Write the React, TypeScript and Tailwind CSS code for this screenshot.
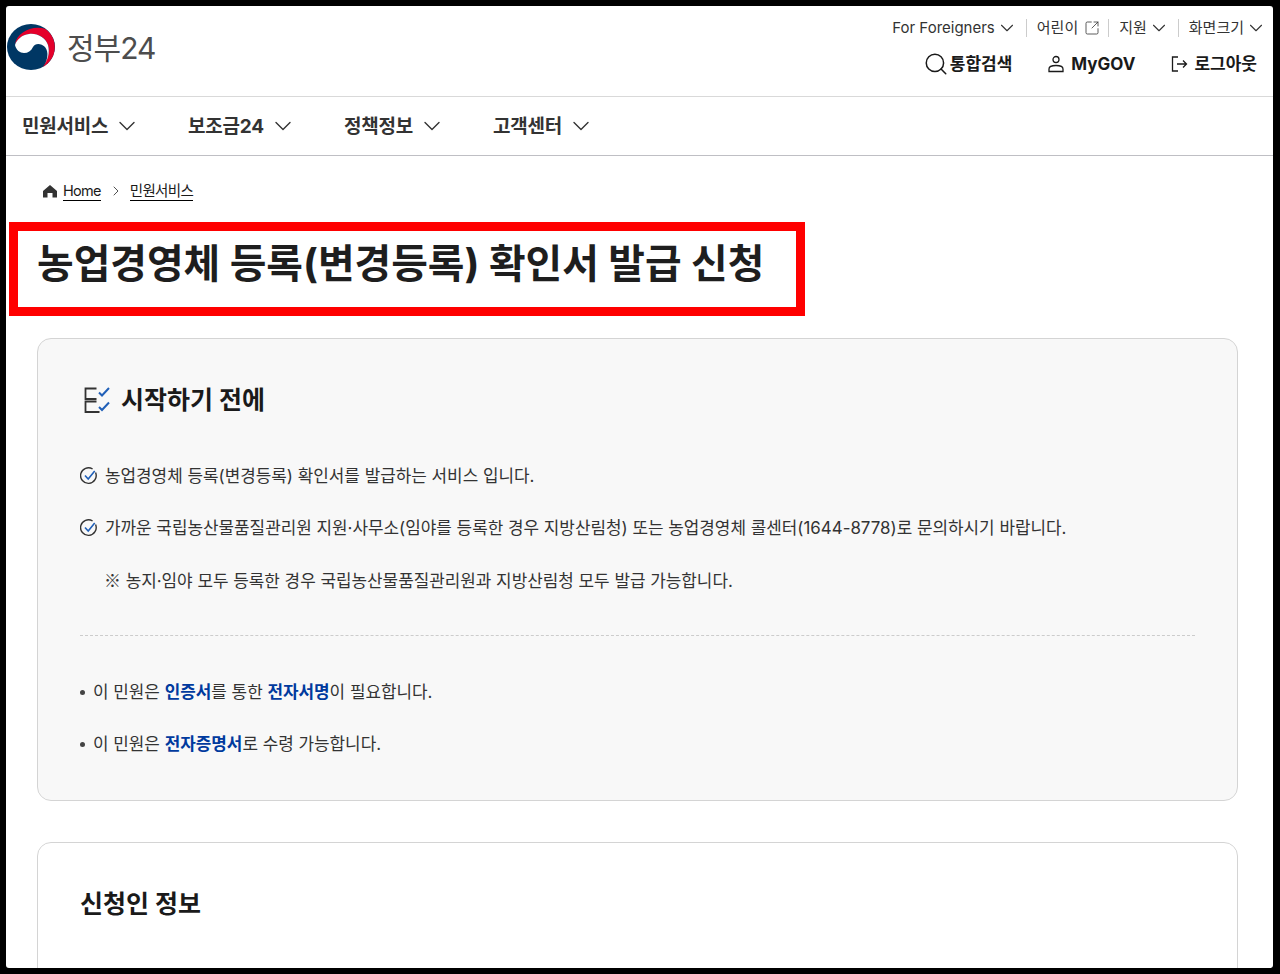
import { ChevronDown, ChevronRight, Search, SquareArrowOutUpRight } from 'lucide-react';

const font = "font-['Inter','Noto_Sans_CJK_KR',sans-serif]";

function Logo() {
  return (
    <svg width="48" height="46" viewBox="0 0 48 46" className="ml-px shrink-0">
      <ellipse cx="24" cy="23" rx="24" ry="23" fill="#003764" />
      <path d="M8 20C10 9 24 1 38 4.7A24 23 0 0 1 36 43C41 36 43 28 41 21C38 12 29 9 22 10C15 11 11 15 8 20Z" fill="#e4002b" />
      <path d="M8 21C10 15 15 11 22 10C30 9 38 13 41 21C43 29 41 36 36 43C41 36 42 28 38 23C34 19 28 19 26 23C24 27 21 29 17 29C13 29 9 26 8 21Z" fill="#fff" />
    </svg>
  );
}

function ChecklistIcon() {
  return (
    <svg width="28" height="28" viewBox="0 0 28 28" fill="none" className="ml-[3px] shrink-0">
      <path d="M13.5 2.5H2.5V13H13.5M13.5 15.5H2.5V26H16.5" stroke="#333" strokeWidth="1.8" />
      <path d="M16 6.5l3 3 7-7.5M16 21l3 3 7-7.5" stroke="#2160b8" strokeWidth="2" />
    </svg>
  );
}

function CheckCircle() {
  return (
    <svg width="18" height="18" viewBox="0 0 18 18" fill="none" className="shrink-0">
      <path d="M15.6 5.6A7.8 7.8 0 1 1 12.6 2" stroke="#333" strokeWidth="1.4" />
      <path d="M5 8.5l3.2 3.5 6.5-8" stroke="#2160b8" strokeWidth="1.6" />
    </svg>
  );
}

function UserIcon() {
  return (
    <svg width="18" height="18" viewBox="0 0 18 18" fill="none" stroke="#1a1a1a" strokeWidth="1.3">
      <circle cx="9" cy="4.5" r="3" />
      <path d="M2 16.5V14C2 11.5 5 10.5 9 10.5S16 11.5 16 14V16.5Z" />
    </svg>
  );
}

function LogoutIcon() {
  return (
    <svg width="18" height="18" viewBox="0 0 18 18" fill="none" stroke="#1a1a1a" strokeWidth="1.3">
      <path d="M8 2H2.5V16H8M7 9H16M13 5.5L16.5 9L13 12.5" />
    </svg>
  );
}

function HomeIcon() {
  return (
    <svg width="14" height="14" viewBox="0 0 14 14" className="mr-[6px] shrink-0">
      <path d="M7 1L14 7V13.5H9.5V9H4.5V13.5H0V7Z" fill="#333" />
    </svg>
  );
}

function UtilItem({ label }: { label: string }) {
  return (
    <span className="flex items-center gap-px text-[15px] leading-5 text-[#333]">
      {label}
      <ChevronDown size={22} strokeWidth={1.2} />
    </span>
  );
}

function Divider() {
  return <span className="mr-[10px] ml-[8px] h-[18px] w-px bg-[#ccc]" />;
}

function NavItem({ label, width }: { label: string; width: string }) {
  return (
    <div className={`flex items-center gap-[5px] ${width}`}>
      <span className="relative top-px text-[19px] font-bold tracking-[-0.2px] text-[#333]">{label}</span>
      <ChevronDown size={28} strokeWidth={1.2} className="text-[#333]" />
    </div>
  );
}

export default function App() {
  return (
    <div className={`h-[974px] overflow-hidden bg-black pt-[6px] pr-[7px] pb-[6px] pl-[6px] ${font}`}>
      <div className="h-full overflow-hidden rounded-[3px] bg-white">
        {/* top header */}
        <header className="flex h-[91px] justify-between border-b border-[#d9d9d9]">
          <div className="flex items-start pt-[18px]">
            <Logo />
            <span className="mt-[6px] ml-[12px] text-[30px] leading-9 tracking-[-1px] text-[#4d4d4d]">정부24</span>
          </div>
          <div className="flex flex-col items-end pt-[11px] pr-[6px]">
            <div className="flex items-center">
              <UtilItem label="For Foreigners" />
              <Divider />
              <span className="flex items-center gap-[6px] text-[15px] leading-5 text-[#333]">
                어린이
                <SquareArrowOutUpRight size={16} strokeWidth={1.2} />
              </span>
              <span className="mr-[10px] ml-[8px] h-[18px] w-px bg-[#ccc]" />
              <UtilItem label="지원" />
              <Divider />
              <UtilItem label="화면크기" />
            </div>
            <div className="mt-[12px] flex items-center pr-[10px] text-[17px] font-bold leading-6 text-[#1a1a1a]">
              <span className="flex items-center gap-px">
                <Search size={26} strokeWidth={1.4} />
                통합검색
              </span>
              <span className="ml-[35px] flex items-center gap-[6px]">
                <UserIcon />
                MyGOV
              </span>
              <span className="ml-[35px] flex items-center gap-[6px]">
                <LogoutIcon />
                로그아웃
              </span>
            </div>
          </div>
        </header>

        {/* main nav */}
        <nav className="flex h-[59px] items-center border-b border-[#bfbfc4] pl-[16px]">
          <NavItem label="민원서비스" width="w-[166px]" />
          <NavItem label="보조금24" width="w-[156px]" />
          <NavItem label="정책정보" width="w-[149px]" />
          <NavItem label="고객센터" width="w-auto" />
        </nav>

        {/* breadcrumb */}
        <div className="mt-[25px] flex h-[20px] items-center pl-[37px] text-[14.5px] tracking-[-0.7px] text-[#1a1a1a]">
          <HomeIcon />
          <span className="border-b border-black leading-[19px]">Home</span>
          <ChevronRight size={16} strokeWidth={1.4} className="mr-[6px] ml-[7px] text-[#444]" />
          <span className="border-b border-black leading-[19px]">민원서비스</span>
        </div>

        {/* title with red marker */}
        <div className="mt-[21px] ml-[3px] flex h-[94px] w-[796px] items-center border-[9px] border-[#ff0000] pb-[10px] pl-[19px]">
          <h1 className="text-[39.85px] font-bold leading-none text-[#1e1e1e]">농업경영체 등록(변경등록) 확인서 발급 신청</h1>
        </div>

        {/* before start card */}
        <section className="mt-[22px] mr-[35px] ml-[31px] h-[463px] rounded-[14px] border border-[#d4d4d4] bg-[#f8f8f8] px-[42px] pt-[43px]">
          <div className="flex items-center gap-[10px]">
            <ChecklistIcon />
            <h2 className="text-[25px] font-bold leading-9 text-[#1a1a1a]">시작하기 전에</h2>
          </div>
          <div className="mt-[46px] space-y-[28px] text-[16.9px] leading-6 text-[#333]">
            <p className="flex items-center gap-[7px]">
              <CheckCircle />
              농업경영체 등록(변경등록) 확인서를 발급하는 서비스 입니다.
            </p>
            <p className="flex items-center gap-[7px]">
              <CheckCircle />
              가까운 국립농산물품질관리원 지원·사무소(임야를 등록한 경우 지방산림청) 또는 농업경영체 콜센터(1644-8778)로 문의하시기 바랍니다.
            </p>
            <p className="pl-[24px]">
              <span className="font-['Noto_Sans_CJK_KR']">※</span> 농지·임야 모두 등록한 경우 국립농산물품질관리원과 지방산림청 모두 발급 가능합니다.
            </p>
          </div>
          <div className="mt-[42px] border-t border-dashed border-[#ccc]" />
          <ul className="mt-[44px] space-y-[28px] text-[16.9px] leading-6 text-[#333]">
            <li className="flex items-center gap-[8px]">
              <span className="size-[5px] rounded-full bg-[#444]" />
              <span>
                이 민원은 <b className="text-[#003a9e]">인증서</b>를 통한 <b className="text-[#003a9e]">전자서명</b>이 필요합니다.
              </span>
            </li>
            <li className="flex items-center gap-[8px]">
              <span className="size-[5px] rounded-full bg-[#444]" />
              <span>
                이 민원은 <b className="text-[#003a9e]">전자증명서</b>로 수령 가능합니다.
              </span>
            </li>
          </ul>
        </section>

        {/* applicant card, runs off the page */}
        <section className="mt-[41px] mr-[35px] ml-[31px] h-[300px] rounded-[14px] border border-[#d4d4d4] bg-white px-[42px] pt-[43px]">
          <h2 className="text-[25px] font-bold leading-9 text-[#1a1a1a]">신청인 정보</h2>
        </section>
      </div>
    </div>
  );
}
